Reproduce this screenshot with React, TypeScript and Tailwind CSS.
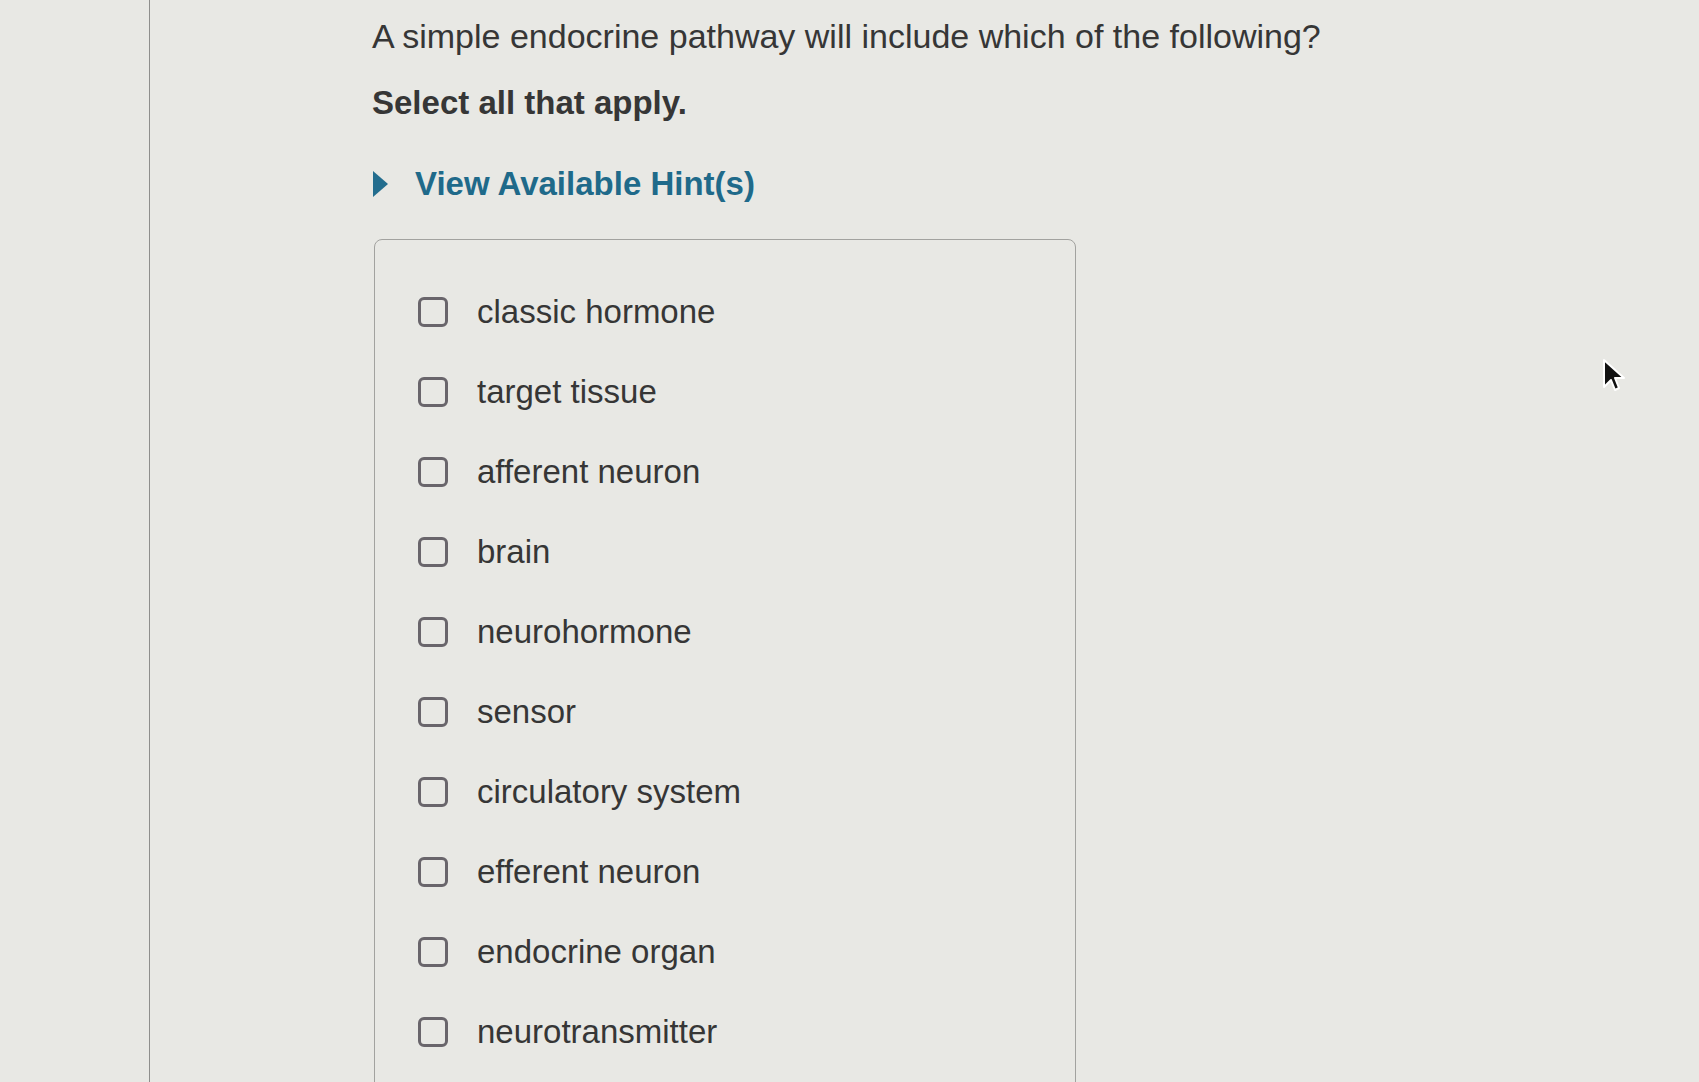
const options = [
  "classic hormone",
  "target tissue",
  "afferent neuron",
  "brain",
  "neurohormone",
  "sensor",
  "circulatory system",
  "efferent neuron",
  "endocrine organ",
  "neurotransmitter",
];

function Cursor() {
  return (
    <svg
      className="absolute left-[1600px] top-[357px]"
      width="28"
      height="40"
      viewBox="0 0 28 40"
    >
      <path
        d="M4 3 L4 30 L11 23 L15 33 L19 31 L15 21 L24 21 Z"
        fill="#111"
        stroke="#fff"
        strokeWidth="2"
        strokeLinejoin="round"
      />
    </svg>
  );
}

export default function App() {
  return (
    <div className="relative flex h-[1082px] w-full overflow-hidden bg-[#e8e8e4] font-['Liberation_Sans',Arial,sans-serif] text-[#363636]">
      <div className="w-[150px] shrink-0 border-r-[1.5px] border-[#8e8e8c]" />
      <main className="pl-[222px] pt-[16px]">
        <h1 className="text-[34px] leading-[40px] whitespace-nowrap">
          A simple endocrine pathway will include which of the following?
        </h1>
        <p className="mt-[27px] text-[33px] font-bold leading-[40px]">Select all that apply.</p>
        <div className="mt-[41px] flex h-[40px] items-center gap-[27px] text-[#1f6a8a]">
          <svg width="15" height="26" viewBox="0 0 15 26" className="ml-[1px]">
            <path d="M0 0 L15 13 L0 26 Z" fill="#236d8e" />
          </svg>
          <span className="text-[33px] font-bold leading-[40px]">View Available Hint(s)</span>
        </div>
        <div className="mt-[35px] ml-[2px] w-[702px] rounded-[8px] border-[1.5px] border-[#a2a29f] pl-[43px] pt-[32px] pb-[40px]">
          {options.map((o) => (
            <label key={o} className="flex h-[80px] items-center gap-[29px]">
              <span className="h-[30px] w-[30px] shrink-0 rounded-[6px] border-[3px] border-[#69656b]" />
              <span className="text-[33px] leading-[40px]">{o}</span>
            </label>
          ))}
        </div>
      </main>
      <Cursor />
    </div>
  );
}
